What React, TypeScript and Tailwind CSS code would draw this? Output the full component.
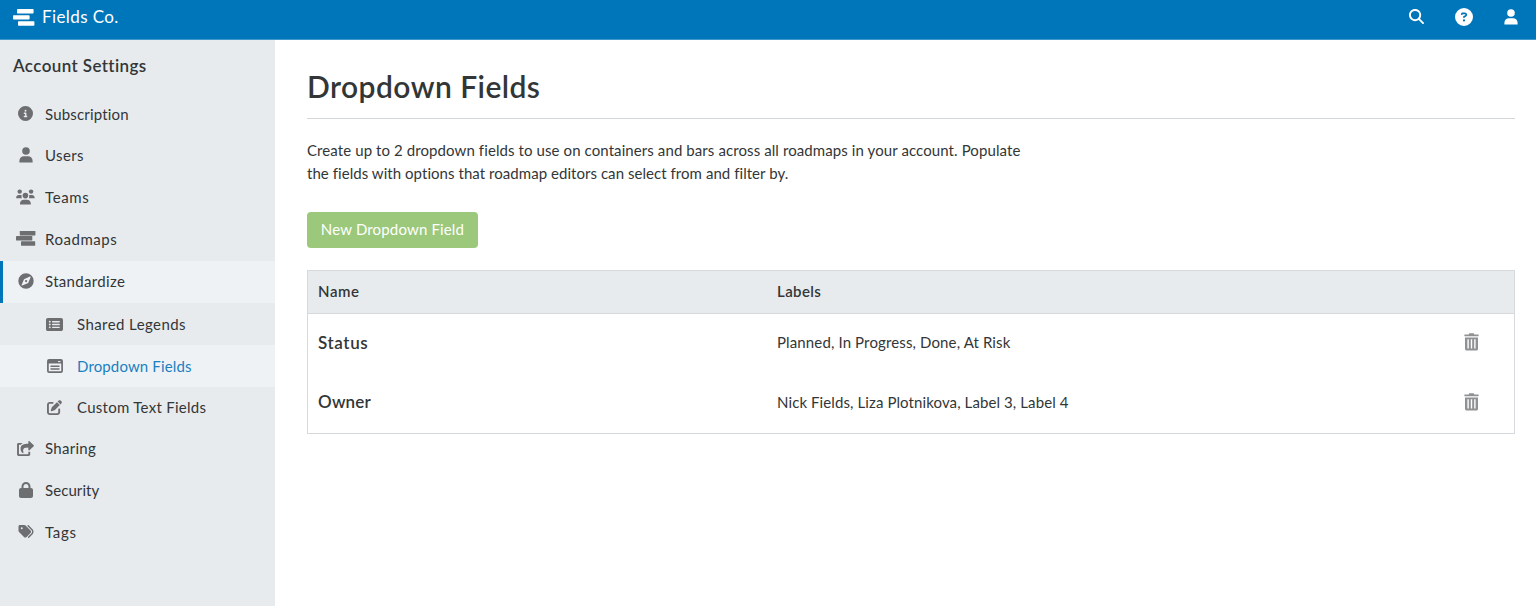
import React from 'react';
import { FaPenToSquare, FaLock, FaTags, FaCircleInfo, FaCircleQuestion, FaRectangleList, FaMagnifyingGlass } from 'react-icons/fa6';
import { FaShareSquare } from 'react-icons/fa';

type IconProps = { className?: string };

function LogoIcon({ className }: IconProps) {
  return (
    <svg viewBox="0 0 22 17" fill="currentColor" className={className}>
      <rect x="4" y="0" width="16.6" height="4.5" rx="0.8" />
      <rect x="0" y="6.2" width="16.6" height="4.4" rx="0.8" />
      <rect x="5" y="12.2" width="16.4" height="4.5" rx="0.8" />
    </svg>
  );
}

function RoadmapIcon({ className }: IconProps) {
  return (
    <svg viewBox="0 0 20 15" fill="currentColor" className={className}>
      <rect x="3.8" y="0" width="15.6" height="4.4" rx="0.4" />
      <rect x="0" y="5.1" width="16.3" height="4.4" rx="0.4" />
      <rect x="5" y="10.3" width="14.2" height="4.4" rx="0.4" />
    </svg>
  );
}

function UserIcon({ className }: IconProps) {
  return (
    <svg viewBox="0 0 14 16" fill="currentColor" className={className}>
      <circle cx="7" cy="4" r="3.8" />
      <path d="M0.4 15.4v-1.6c0-2.7 2-4.6 4.6-4.6h4c2.6 0 4.6 1.9 4.6 4.6v1.6z" />
    </svg>
  );
}

function TeamIcon({ className }: IconProps) {
  return (
    <svg viewBox="0 0 19 16" fill="currentColor" className={className}>
      <circle cx="3.7" cy="2.6" r="2.2" />
      <circle cx="15.1" cy="2.6" r="2.2" />
      <circle cx="9.4" cy="6.6" r="2.8" />
      <path d="M0.2 9.3V8.6c0-1.6 1.1-2.7 2.7-2.7h1.600c.4 0 .8.1 1.100.3-.2 1.200-.1 2.200.3 3.100z" />
      <path d="M18.600 9.300V8.600c0-1.600-1.100-2.700-2.700-2.700h-1.600c-.4 0-.8.1-1.100.3.2 1.200.1 2.200-.3 3.100z" />
      <path d="M4 15.400v-.8c0-2.300 1.700-3.900 3.900-3.900h3c2.200 0 3.900 1.600 3.900 3.900v.8z" />
    </svg>
  );
}

function CompassIcon({ className }: IconProps) {
  return (
    <svg viewBox="0 0 16 16" fill="currentColor" className={className}>
      <path
        fillRule="evenodd"
        d="M8 .3a7.700 7.700 0 1 0 0 15.400A7.700 7.700 0 0 0 8 .3zM12 3.600c.4-.2.800.2.600.6l-2.300 5.500a1.200 1.200 0 0 1-.6.6L4.200 12.600c-.4.2-.8-.2-.6-.6l2.300-5.500a1.200 1.200 0 0 1 .6-.6zM8.100 7a1.100 1.100 0 1 0 0 2.200A1.100 1.100 0 0 0 8.100 7z"
      />
    </svg>
  );
}

function WindowIcon({ className }: IconProps) {
  return (
    <svg viewBox="0 0 16 14" className={className}>
      <rect x="0.9" y="0.9" width="14.200" height="12.200" rx="1.200" fill="none" stroke="currentColor" strokeWidth="1.700" />
      <path d="M1 1h14v3.500H1z" fill="currentColor" />
      <path d="M11 2.600h2.500" stroke="#eef2f5" strokeWidth="1" />
      <path d="M3.500 7.300h9M3.500 10h9" stroke="currentColor" strokeWidth="1.400" />
    </svg>
  );
}

function TrashIcon({ className }: IconProps) {
  return (
    <svg viewBox="0 0 15 18" fill="currentColor" className={className}>
      <path d="M4.800 1.400C4.800.6 5.200.2 6 .2h3c.8 0 1.200.4 1.200 1.200H14.600V3.200H.4V1.400z" />
      <path
        fillRule="evenodd"
        d="M1 4.500h13v11.300c0 1.100-.7 1.800-1.800 1.800H2.800C1.700 17.600 1 16.900 1 15.800zM3.400 6.200v9.400h1.400V6.200zM6.800 6.200v9.400h1.400V6.200zM10.200 6.200v9.400h1.400V6.200z"
      />
    </svg>
  );
}

type NavItem = {
  label: string;
  icon: React.ReactNode;
  row?: string;
  text: string;
  child?: boolean;
};

const NAV: NavItem[] = [
  { label: 'Subscription', icon: <FaCircleInfo className="size-[15px]" />, row: 'h-[41.8px] pb-px border-transparent', text: 'tracking-[0.18px]' },
  { label: 'Users', icon: <UserIcon className="h-[16px] w-[14px]" />, row: 'h-[41.8px] pb-[2px] border-transparent', text: 'tracking-[0.4px]' },
  { label: 'Teams', icon: <TeamIcon className="h-[16px] w-[19px]" />, row: 'h-[41.8px] pb-[2px] border-transparent', text: 'tracking-[0.6px]' },
  { label: 'Roadmaps', icon: <RoadmapIcon className="h-[15px] w-[20px]" />, row: 'h-[41.8px] pb-[2px] border-transparent', text: 'tracking-[0.55px]' },
  { label: 'Standardize', icon: <CompassIcon className="size-[16px]" />, row: 'h-[42.6px] pb-[2px] bg-[#eef2f5] border-[#0076ba]', text: 'tracking-[0.33px]' },
  { label: 'Shared Legends', icon: <FaRectangleList className="h-[17px] w-[17px]" />, text: 'tracking-[0.42px]', child: true },
  { label: 'Dropdown Fields', icon: <WindowIcon className="h-[14px] w-[16px]" />, row: 'h-[41.8px] bg-[#eef2f5] border-[#eef2f5]', text: 'tracking-[0.14px] text-[#1a80c0]', child: true },
  { label: 'Custom Text Fields', icon: <FaPenToSquare className="size-[15px]" />, row: 'h-[41.8px] pb-px border-transparent', text: 'tracking-[0.28px]', child: true },
  { label: 'Sharing', icon: <FaShareSquare className="h-[15px] w-[17px]" />, row: 'h-[41.8px] -mt-[1.4px] border-transparent', text: 'tracking-[0.29px]' },
  { label: 'Security', icon: <FaLock className="h-[16px] w-[14px]" />, text: 'tracking-[0.08px]' },
  { label: 'Tags', icon: <FaTags className="h-[15px] w-[16px]" />, text: 'tracking-[0.7px]' },
];

const FIELDS = [
  { name: 'Status', nameClass: 'tracking-[0.6px]', labels: 'Planned, In Progress, Done, At Risk', labelsClass: 'tracking-[0.13px]' },
  { name: 'Owner', nameClass: 'tracking-[0.2px]', labels: 'Nick Fields, Liza Plotnikova, Label 3, Label 4', labelsClass: 'tracking-[0.1px]' },
];

function SidebarRow({ item }: { item: NavItem }) {
  return (
    <a className={`flex items-center border-l-[3px] ${item.row ?? 'h-[41.8px] border-transparent'} ${item.child ? 'pl-[41px]' : 'pl-[12px]'}`}>
      <span className={`flex w-[21px] shrink-0 justify-center text-[#6c6e70] ${item.child ? 'mr-[12px]' : 'mr-[9px]'}`}>{item.icon}</span>
      <span className={`whitespace-nowrap text-[15px] ${item.text}`}>{item.label}</span>
    </a>
  );
}

export default function App() {
  return (
    <div className="flex h-[606px] w-full flex-col overflow-hidden bg-white font-['Lato',sans-serif] text-[#333637]">
      <header className="flex h-[40px] shrink-0 items-center justify-between border-b border-[#3f98cc] bg-[#0076ba] pb-[6px] pl-[13px] pr-[18px] text-white">
        <div className="flex items-center">
          <LogoIcon className="mt-px h-[17px] w-[22px]" />
          <span className="ml-[7px] text-[17px] leading-[24px] tracking-[0.4px]">Fields Co.</span>
        </div>
        <div className="flex items-center">
          <FaMagnifyingGlass className="mr-[31px] size-[15px]" />
          <FaCircleQuestion className="mr-[31px] size-[18px]" />
          <UserIcon className="h-[16px] w-[14px]" />
        </div>
      </header>
      <div className="flex min-h-0 flex-1">
        <aside className="w-[275px] shrink-0 bg-[#e7ebee]">
          <h2 className="flex h-[53.600px] items-center pb-[3px] pl-[13px] text-[17px] font-semibold tracking-[0.4px]">Account Settings</h2>
          <nav className="flex flex-col">
            {NAV.map((item) => (
              <SidebarRow key={item.label} item={item} />
            ))}
          </nav>
        </aside>
        <main className="flex-1 pl-[32px] pr-[21px]">
          <h1 className="flex h-[79px] items-center border-b border-[#d3d7da] pt-[15px] text-[30px] font-semibold tracking-[0.45px]">
            Dropdown Fields
          </h1>
          <p className="mt-[20px] text-[15px] leading-[23px]">
            <span className="block tracking-[0.095px]">
              Create up to 2 dropdown fields to use on containers and bars across all roadmaps in your account. Populate
            </span>
            <span className="block tracking-[0.051px]">the fields with options that roadmap editors can select from and filter by.</span>
          </p>
          <button className="mt-[27px] flex h-[36px] w-[171px] items-center justify-center rounded-[4px] bg-[#9bc87b] pb-[2px] text-[15px] tracking-[0.16px] text-white">
            New Dropdown Field
          </button>
          <section className="mt-[22px] border border-[#d6dadd]">
            <div className="flex h-[43px] items-center border-b border-[#d6dadd] bg-[#e7ebee] pb-[2px] pl-[10px] text-[15px] font-semibold">
              <span className="w-[459px] tracking-[0.6px]">Name</span>
              <span className="tracking-[0.4px]">Labels</span>
            </div>
            {FIELDS.map((f) => (
              <div key={f.name} className="flex h-[59.500px] items-center pb-[3px] pl-[10px] pr-[35px]">
                <span className={`w-[459px] text-[17px] font-semibold ${f.nameClass}`}>{f.name}</span>
                <span className={`flex-1 text-[15px] ${f.labelsClass}`}>{f.labels}</span>
                <TrashIcon className="h-[18px] w-[15px] text-[#8f9193]" />
              </div>
            ))}
          </section>
        </main>
      </div>
    </div>
  );
}
